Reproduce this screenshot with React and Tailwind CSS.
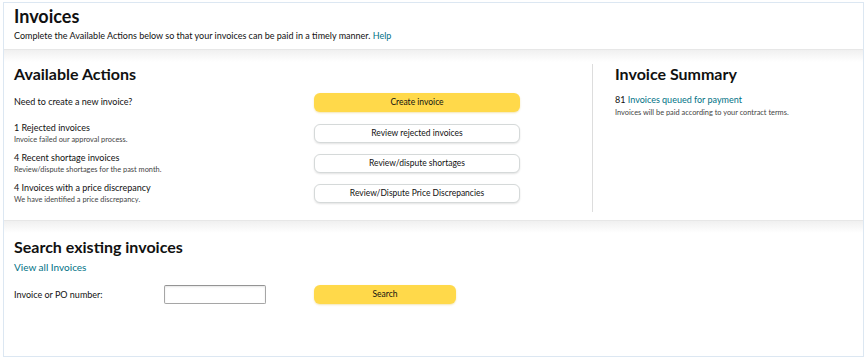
import React from 'react';

const ActionRow = ({ title, note, label }) => (
    <div className="flex items-center h-[30px]">
        <div className="w-[300px] flex flex-col">
            <span className="text-[9px] leading-[12px] text-[#111]">{title}</span>
            <span className="text-[7.4px] leading-[10px] text-[#444] mt-[1px]">{note}</span>
        </div>
        <button className="w-[206px] h-[19px] rounded-[6px] bg-white border border-[#d5d9d9] shadow-[0_1px_2px_rgba(15,17,17,0.12)] text-[8.5px] text-[#111]">
            {label}
        </button>
    </div>
);

const App = () => {
    return (
        <div className="w-[866px] h-[359px] bg-white pt-[2px] pl-[3px] pr-[2px] pb-[2px] font-['Lato','Noto_Sans',sans-serif]">
            <div className="h-full border border-[#dce7f2] flex flex-col">
                <div className="h-[46px] pl-[10px] pt-[1px]">
                    <h1 className="text-[18px] leading-[24px] font-bold text-[#111]">Invoices</h1>
                    <p className="text-[9px] leading-[12px] text-[#111] mt-[2px]">
                        Complete the Available Actions below so that your invoices can be paid in a timely manner.{' '}
                        <a className="text-[#007185]">Help</a>
                    </p>
                </div>

                <div className="h-[171px] bg-[linear-gradient(to_bottom,#f0f0f0,#ffffff_12px)] border-t border-[#e7e7e7] flex pt-[14px]">
                    <div className="w-[589px] pl-[10px] border-r border-[#dddddd] mb-[8px]">
                        <h2 className="text-[16px] leading-[20px] font-bold text-[#111]">Available Actions</h2>
                        <div className="flex items-center h-[20px] mt-[8px]">
                            <span className="w-[300px] text-[9px] text-[#111]">Need to create a new invoice?</span>
                            <button className="w-[206px] h-[19px] rounded-[6px] bg-[#ffd94a] shadow-[0_1px_2px_rgba(213,169,0,0.3)] text-[8.5px] text-[#111]">
                                Create invoice
                            </button>
                        </div>
                        <div className="mt-[6px] flex flex-col">
                            <ActionRow title="1 Rejected invoices" note="Invoice failed our approval process." label="Review rejected invoices" />
                            <ActionRow title="4 Recent shortage invoices" note="Review/dispute shortages for the past month." label="Review/dispute shortages" />
                            <ActionRow title="4 Invoices with a price discrepancy" note="We have identified a price discrepancy." label="Review/Dispute Price Discrepancies" />
                        </div>
                    </div>
                    <div className="pl-[22px]">
                        <h2 className="text-[16px] leading-[20px] font-bold text-[#111]">Invoice Summary</h2>
                        <p className="text-[9px] leading-[12px] text-[#111] mt-[10px]">
                            81 <a className="text-[#007185]">Invoices queued for payment</a>
                        </p>
                        <p className="text-[7.4px] leading-[10px] text-[#444] mt-[2px]">Invoices will be paid according to your contract terms.</p>
                    </div>
                </div>

                <div className="flex-1 bg-[linear-gradient(to_bottom,#f0f0f0,#ffffff_12px)] border-t border-[#e7e7e7] pl-[10px] pt-[16px]">
                    <h2 className="text-[16px] leading-[20px] font-bold text-[#111]">Search existing invoices</h2>
                    <a className="block text-[10px] leading-[14px] text-[#007185] mt-[3px]">View all Invoices</a>
                    <div className="flex items-center mt-[11px]">
                        <span className="w-[150px] text-[9px] text-[#111]">Invoice or PO number:</span>
                        <input className="w-[102px] h-[19px] border border-[#a6a6a6] border-t-[#949494] rounded-[2px] shadow-[inset_0_1px_2px_rgba(0,0,0,0.1)] outline-none" />
                        <button className="ml-[48px] w-[142px] h-[19px] rounded-[6px] bg-[#ffd94a] shadow-[0_1px_2px_rgba(213,169,0,0.3)] text-[8.5px] text-[#111]">
                            Search
                        </button>
                    </div>
                </div>
            </div>
        </div>
    );
};

export default App;
